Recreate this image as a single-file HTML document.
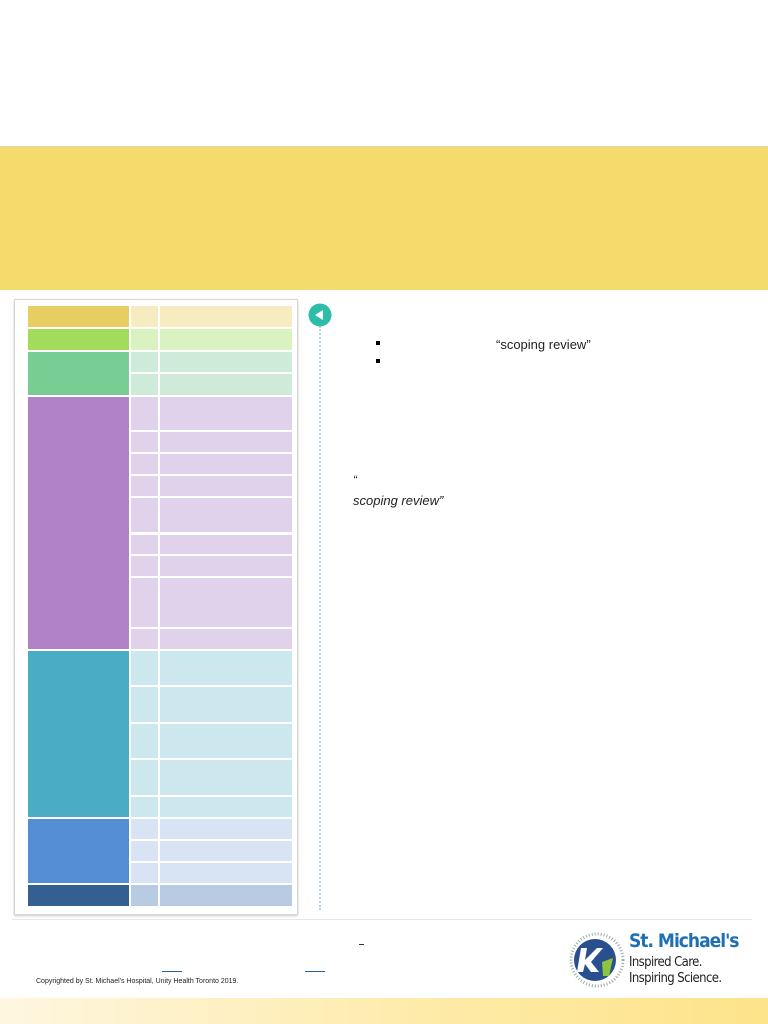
<!DOCTYPE html>
<html><head><meta charset="utf-8"><style>
body{margin:0;width:768px;height:1024px;position:relative;background:#fff;font-family:"Liberation Sans",sans-serif;overflow:hidden}
div{position:absolute}
.l{left:28px;width:101px}
.m{left:131px;width:27px}
.r{left:160px;width:132px}
</style></head><body>
<div style="left:0;top:146px;width:768px;height:1px;background:#e0d6a8"></div>
<div style="left:0;top:147px;width:768px;height:143px;background:#f5db6b"></div>
<div style="left:14px;top:299px;width:282px;height:614px;border:1px solid #d6d6d6;box-shadow:0 1px 2px #ccc"></div>

<div class="l" style="top:306px;height:21px;background:#e8cd62"></div>
<div class="m" style="top:306px;height:21px;background:#f7ebc0"></div><div class="r" style="top:306px;height:21px;background:#f7ebc0"></div>

<div class="l" style="top:329px;height:21px;background:#a2dc5a"></div>
<div class="m" style="top:329px;height:21px;background:#daf2c0"></div><div class="r" style="top:329px;height:21px;background:#daf2c0"></div>

<div class="l" style="top:352px;height:43px;background:#78cd94"></div>
<div class="m" style="top:352px;height:20px;background:#cdebd8"></div><div class="r" style="top:352px;height:20px;background:#cdebd8"></div>
<div class="m" style="top:374px;height:21px;background:#cdebd8"></div><div class="r" style="top:374px;height:21px;background:#cdebd8"></div>

<div class="l" style="top:397px;height:252px;background:#b282c9"></div>
<div class="m" style="top:397px;height:33px;background:#e1d2eb"></div><div class="r" style="top:397px;height:33px;background:#e1d2eb"></div>
<div class="m" style="top:432px;height:20px;background:#e1d2eb"></div><div class="r" style="top:432px;height:20px;background:#e1d2eb"></div>
<div class="m" style="top:454px;height:20px;background:#e1d2eb"></div><div class="r" style="top:454px;height:20px;background:#e1d2eb"></div>
<div class="m" style="top:476px;height:20px;background:#e1d2eb"></div><div class="r" style="top:476px;height:20px;background:#e1d2eb"></div>
<div class="m" style="top:498px;height:34px;background:#e1d2eb"></div><div class="r" style="top:498px;height:34px;background:#e1d2eb"></div>
<div class="m" style="top:535px;height:19px;background:#e1d2eb"></div><div class="r" style="top:535px;height:19px;background:#e1d2eb"></div>
<div class="m" style="top:556px;height:20px;background:#e1d2eb"></div><div class="r" style="top:556px;height:20px;background:#e1d2eb"></div>
<div class="m" style="top:578px;height:49px;background:#e1d2eb"></div><div class="r" style="top:578px;height:49px;background:#e1d2eb"></div>
<div class="m" style="top:629px;height:20px;background:#e1d2eb"></div><div class="r" style="top:629px;height:20px;background:#e1d2eb"></div>

<div class="l" style="top:651px;height:166px;background:#4aacc5"></div>
<div class="m" style="top:651px;height:34px;background:#cde7ee"></div><div class="r" style="top:651px;height:34px;background:#cde7ee"></div>
<div class="m" style="top:687px;height:35px;background:#cde7ee"></div><div class="r" style="top:687px;height:35px;background:#cde7ee"></div>
<div class="m" style="top:724px;height:34px;background:#cde7ee"></div><div class="r" style="top:724px;height:34px;background:#cde7ee"></div>
<div class="m" style="top:760px;height:35px;background:#cde7ee"></div><div class="r" style="top:760px;height:35px;background:#cde7ee"></div>
<div class="m" style="top:797px;height:20px;background:#cde7ee"></div><div class="r" style="top:797px;height:20px;background:#cde7ee"></div>

<div class="l" style="top:819px;height:64px;background:#548dd4"></div>
<div class="m" style="top:819px;height:20px;background:#d8e4f4"></div><div class="r" style="top:819px;height:20px;background:#d8e4f4"></div>
<div class="m" style="top:841px;height:20px;background:#d8e4f4"></div><div class="r" style="top:841px;height:20px;background:#d8e4f4"></div>
<div class="m" style="top:863px;height:20px;background:#d8e4f4"></div><div class="r" style="top:863px;height:20px;background:#d8e4f4"></div>

<div class="l" style="top:885px;height:21px;background:#365f91"></div>
<div class="m" style="top:885px;height:21px;background:#b8cbe3"></div><div class="r" style="top:885px;height:21px;background:#b8cbe3"></div>

<div style="left:319px;top:326px;height:584px;border-left:2px dotted #b7d2ea"></div>
<svg style="position:absolute;left:308px;top:303px" width="24" height="24"><circle cx="12" cy="12" r="11.5" fill="#2dbda8"/><path d="M7 12 L15 7 L15 17 Z" fill="#fff"/></svg>

<div style="left:376px;top:341px;width:4px;height:4px;background:#000"></div>
<div style="left:376px;top:359px;width:4px;height:4px;background:#000"></div>
<div style="left:496px;top:337px;font-size:13px;color:#222">“scoping review”</div>
<div style="left:353px;top:473px;font-size:12px;color:#222;font-style:italic">“</div>
<div style="left:353px;top:493px;font-size:13px;color:#222;font-style:italic">scoping review”</div>

<div style="left:12px;top:919px;width:740px;height:1px;background:#dde9f3"></div>
<div style="left:359px;top:944px;width:5px;height:1px;background:#333"></div>
<div style="left:162px;top:971px;width:20px;height:1px;background:#2f5fa0"></div>
<div style="left:305px;top:971px;width:20px;height:1px;background:#2f5fa0"></div>
<div style="left:36px;top:978px;font-size:7px;color:#222">Copyrighted by St. Michael's Hospital, Unity Health Toronto 2019.</div>

<svg style="position:absolute;left:569px;top:932px" width="56" height="56"><circle cx="28" cy="28" r="26" fill="none" stroke="#9aa" stroke-width="3" stroke-dasharray="1 2"/><circle cx="26" cy="28" r="21" fill="#2a4f8f"/><path d="M12 16 L18 16 L16 28 L28 16 L34 16 L22 30 L30 40 L22 40 L16 32 L14 40 L8 40 Z" fill="#fff"/><path d="M33 30 L44 26 L40 44 L34 44 Z" fill="#8cc63f"/></svg>
<div style="left:629px;top:930px;font-size:19px;color:#1f6fb5;font-family:'DejaVu Sans Condensed','Liberation Sans Narrow',sans-serif;letter-spacing:-1px;font-weight:bold">St. Michael's</div>
<div style="left:629px;top:955px;font-size:13px;color:#222;line-height:16px;font-family:'DejaVu Sans Condensed','Liberation Sans Narrow',sans-serif;letter-spacing:-0.6px">Inspired Care.<br>Inspiring Science.</div>

<div style="left:0;top:998px;width:768px;height:26px;background:linear-gradient(90deg,#fef6e0,#feeaa5 60%,#fde38a)"></div>
</body></html>
